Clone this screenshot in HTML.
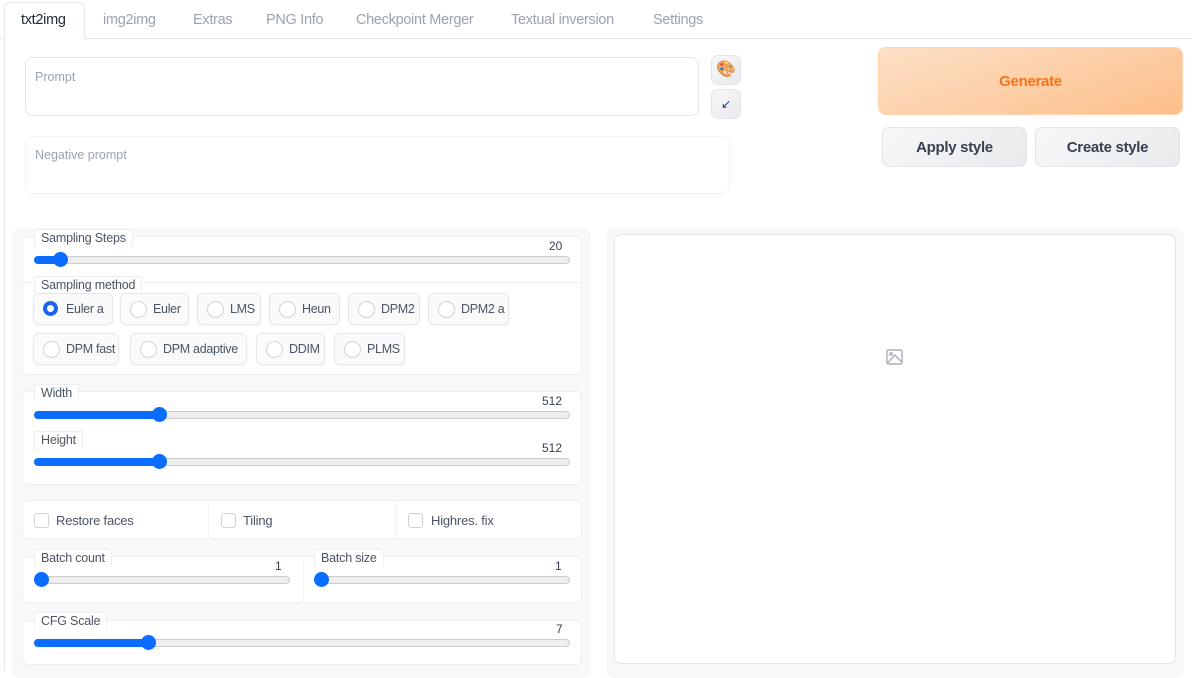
<!DOCTYPE html>
<html><head><style>
*{box-sizing:border-box;margin:0;padding:0}
body{width:1192px;height:670px;overflow:hidden;background:#fff;font-family:"Liberation Sans",sans-serif;position:relative;color:#374151}
.a{position:absolute}
.tab{position:absolute;top:12px;font-size:14.5px;color:#9ca3af;letter-spacing:-0.3px}
.box{position:absolute;background:#fff;border:1px solid #e5e7eb;border-radius:6px}
.lbl{position:absolute;font-size:12.5px;color:#4b5563;background:#fff;border:1px solid #eceef1;border-bottom:none;padding:1px 6px;line-height:14px;letter-spacing:-0.2px}
.val{position:absolute;font-size:12px;color:#374151}
.track{position:absolute;height:8px;border:1px solid #c9ccd1;border-radius:4px;background:#eee}
.fill{position:absolute;height:8px;background:#0b6dff;border-radius:4px}
.thumb{position:absolute;width:15px;height:15px;border-radius:50%;background:#0b6dff}
.radio{position:absolute;height:32px;border:1px solid #e5e7eb;border-radius:6px;background:#fafafa;font-size:12.5px;color:#4b5563;padding:0 0 0 32px;line-height:30px;box-shadow:0 1px 2px rgba(0,0,0,.05);letter-spacing:-0.3px;white-space:nowrap}
.radio:before{content:"";position:absolute;left:9px;top:7px;width:15px;height:15px;border:1px solid #cfd3d8;border-radius:50%;background:#fff}
.radio.on:before{border:4px solid #1d63ed;width:15px;height:15px;box-sizing:border-box}
.cb{position:absolute;width:15px;height:15px;border:1px solid #cfd3d8;border-radius:3px;background:#fff}
.ct{position:absolute;font-size:13px;color:#4b5563;letter-spacing:-0.2px}
.btn{position:absolute;border:1px solid #e3e5e8;border-radius:7px;background:linear-gradient(135deg,#f6f7f8,#e9eaed);font-size:15px;color:#374151;text-align:center;line-height:38px;font-weight:600;letter-spacing:-0.3px}
</style></head><body>
<div class="a" style="left:0;top:38px;width:1192px;height:1px;background:#e5e7eb"></div>
<div class="a" style="left:4px;top:38px;width:1px;height:632px;background:#e5e7eb"></div>
<div class="a" style="left:4px;top:2px;width:81px;height:37px;border:1px solid #e5e7eb;border-bottom:1px solid #fff;border-radius:6px 6px 0 0;background:#fff"></div>
<div class="tab" style="left:21px;color:#1f2937">txt2img</div>
<div class="tab" style="left:103px">img2img</div>
<div class="tab" style="left:193px">Extras</div>
<div class="tab" style="left:266px">PNG Info</div>
<div class="tab" style="left:356px">Checkpoint Merger</div>
<div class="tab" style="left:511px">Textual inversion</div>
<div class="tab" style="left:653px">Settings</div>
<div class="box" style="left:25px;top:57px;width:674px;height:59px;border-radius:8px"></div>
<div class="a" style="left:35px;top:70px;font-size:12.5px;color:#9ca3af">Prompt</div>
<div class="box" style="left:25px;top:136px;width:705px;height:58px;border-color:#f1f2f4;border-radius:8px"></div>
<div class="a" style="left:35px;top:148px;font-size:12.5px;color:#9ca3af">Negative prompt</div>
<div class="btn" style="left:711px;top:55px;width:30px;height:30px;line-height:28px;font-size:16px">🎨</div>
<div class="btn" style="left:711px;top:89px;width:30px;height:30px;line-height:28px;font-size:12px;font-weight:400;color:#1e3a8a">↙</div>
<div class="a" style="left:878px;top:47px;width:305px;height:68px;border-radius:8px;border:1px solid #fcd5b0;background:linear-gradient(160deg,#fde0c6,#fdbf8a);color:#f97316;font-size:15px;font-weight:600;text-align:center;line-height:68px;letter-spacing:-0.3px">Generate</div>
<div class="btn" style="left:882px;top:127px;width:145px;height:40px;line-height:40px">Apply style</div>
<div class="btn" style="left:1035px;top:127px;width:145px;height:40px;line-height:40px">Create style</div>
<div class="a" style="left:12px;top:228px;width:579px;height:450px;background:#f7f8fa;border-radius:8px"></div>
<div class="box" style="left:22px;top:236px;width:560px;height:139px;border-color:#eceef1"></div>
<div class="a" style="left:22px;top:282px;width:560px;height:1px;background:#f0f1f3"></div>
<div class="lbl" style="left:34px;top:229px">Sampling Steps</div>
<div class="val" style="left:549px;top:239px">20</div>
<div class="track" style="left:34px;top:256px;width:536px"></div>
<div class="fill" style="left:34px;top:256px;width:26px"></div>
<div class="thumb" style="left:53px;top:252px"></div>
<div class="lbl" style="left:34px;top:276px">Sampling method</div>
<div class="radio on" style="left:33px;top:293px;width:80px">Euler a</div>
<div class="radio" style="left:120px;top:293px;width:69px">Euler</div>
<div class="radio" style="left:197px;top:293px;width:64px">LMS</div>
<div class="radio" style="left:269px;top:293px;width:71px">Heun</div>
<div class="radio" style="left:348px;top:293px;width:72px">DPM2</div>
<div class="radio" style="left:428px;top:293px;width:81px">DPM2 a</div>
<div class="radio" style="left:33px;top:333px;width:86px">DPM fast</div>
<div class="radio" style="left:130px;top:333px;width:117px">DPM adaptive</div>
<div class="radio" style="left:256px;top:333px;width:69px">DDIM</div>
<div class="radio" style="left:334px;top:333px;width:71px">PLMS</div>
<div class="box" style="left:22px;top:391px;width:560px;height:94px;border-color:#eceef1"></div>
<div class="lbl" style="left:34px;top:384px">Width</div>
<div class="val" style="left:542px;top:394px">512</div>
<div class="track" style="left:34px;top:411px;width:536px"></div>
<div class="fill" style="left:34px;top:411px;width:125px"></div>
<div class="thumb" style="left:152px;top:407px"></div>
<div class="lbl" style="left:34px;top:431px">Height</div>
<div class="val" style="left:542px;top:441px">512</div>
<div class="track" style="left:34px;top:458px;width:536px"></div>
<div class="fill" style="left:34px;top:458px;width:125px"></div>
<div class="thumb" style="left:152px;top:454px"></div>
<div class="box" style="left:22px;top:500px;width:560px;height:39px;border-color:#eceef1"></div>
<div class="a" style="left:208px;top:501px;width:1px;height:37px;background:#f0f1f3"></div>
<div class="a" style="left:396px;top:501px;width:1px;height:37px;background:#f0f1f3"></div>
<div class="cb" style="left:34px;top:513px"></div><div class="ct" style="left:56px;top:513px">Restore faces</div>
<div class="cb" style="left:221px;top:513px"></div><div class="ct" style="left:243px;top:513px">Tiling</div>
<div class="cb" style="left:408px;top:513px"></div><div class="ct" style="left:431px;top:513px">Highres. fix</div>
<div class="box" style="left:22px;top:556px;width:560px;height:47px;border-color:#eceef1"></div>
<div class="a" style="left:303px;top:557px;width:1px;height:45px;background:#f0f1f3"></div>
<div class="lbl" style="left:34px;top:549px">Batch count</div>
<div class="val" style="left:275px;top:559px">1</div>
<div class="track" style="left:34px;top:576px;width:256px"></div>
<div class="thumb" style="left:34px;top:572px"></div>
<div class="lbl" style="left:314px;top:549px">Batch size</div>
<div class="val" style="left:555px;top:559px">1</div>
<div class="track" style="left:314px;top:576px;width:256px"></div>
<div class="thumb" style="left:314px;top:572px"></div>
<div class="box" style="left:22px;top:620px;width:560px;height:45px;border-color:#eceef1"></div>
<div class="lbl" style="left:34px;top:612px">CFG Scale</div>
<div class="val" style="left:556px;top:622px">7</div>
<div class="track" style="left:34px;top:639px;width:536px"></div>
<div class="fill" style="left:34px;top:639px;width:114px"></div>
<div class="thumb" style="left:141px;top:635px"></div>
<div class="a" style="left:606px;top:228px;width:578px;height:450px;background:#f7f8fa;border-radius:8px"></div>
<div class="box" style="left:614px;top:234px;width:562px;height:430px;border-color:#e5e7eb;border-radius:7px"></div>
<svg class="a" style="left:886px;top:349px" width="17" height="16" viewBox="0 0 17 16" fill="none" stroke="#9ca3af" stroke-width="1.2"><rect x="1" y="1" width="15" height="14" rx="1.5"/><circle cx="5" cy="5" r="1.3"/><path d="M1.5 14 L9 6 L15.5 13"/></svg>
</body></html>
